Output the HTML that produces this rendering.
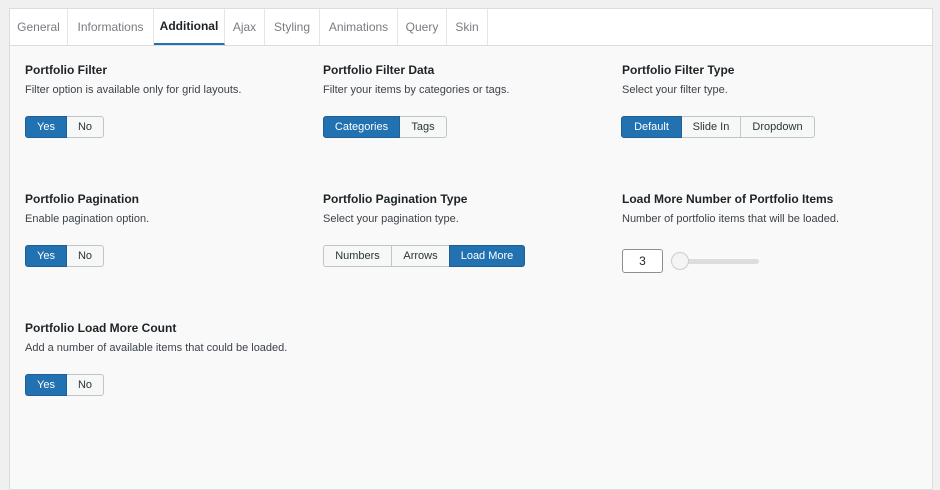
<!DOCTYPE html><html><head><style>
body{margin:0;background:#f0f0f1;font-family:"Liberation Sans",sans-serif;width:940px;height:480px;overflow:hidden}
.panel{position:absolute;left:9px;top:8px;width:922px;height:480px;background:#f9f9f9;border:1px solid #dcdcde}
.tabs{height:36px;background:#fff;border-bottom:1px solid #dcdcde;display:flex;font-size:12px;color:#787c82}
.tabs div{line-height:36px;border-right:1px solid #e5e5e5;text-align:center;box-sizing:border-box}
.tabs .a{color:#1d2327;font-weight:bold;border-bottom:2px solid #2271b1;line-height:35px}
.f{position:absolute}
.t{font-size:12px;font-weight:bold;color:#1d2327}
.d{font-size:11px;color:#3c434a;margin-top:7px}
.g{position:absolute;display:flex}
.g span{height:20px;line-height:20px;font-size:11px;border:1px solid #c3c4c7;background:#f6f7f7;color:#2c3338;text-align:center;margin-left:-1px}
.g span.on{background:#2271b1;border-color:#1d5f96;color:#fff;position:relative}
.g span:first-child{border-radius:3px 0 0 3px}.g span:last-child{border-radius:0 3px 3px 0}
</style></head><body>
<div class="panel"><div class="tabs"><div style="width:58px">General</div><div style="width:86px">Informations</div><div class="a" style="width:71px">Additional</div><div style="width:40px">Ajax</div><div style="width:55px">Styling</div><div style="width:78px">Animations</div><div style="width:49px">Query</div><div style="width:41px">Skin</div></div></div>
<div class="f" style="left:25px;top:63px"><div class="t">Portfolio Filter</div><div class="d">Filter option is available only for grid layouts.</div></div>
<div class="f" style="left:323px;top:63px"><div class="t">Portfolio Filter Data</div><div class="d">Filter your items by categories or tags.</div></div>
<div class="f" style="left:622px;top:63px"><div class="t">Portfolio Filter Type</div><div class="d">Select your filter type.</div></div>
<div class="f" style="left:25px;top:192px"><div class="t">Portfolio Pagination</div><div class="d">Enable pagination option.</div></div>
<div class="f" style="left:323px;top:192px"><div class="t">Portfolio Pagination Type</div><div class="d">Select your pagination type.</div></div>
<div class="f" style="left:622px;top:192px"><div class="t">Load More Number of Portfolio Items</div><div class="d">Number of portfolio items that will be loaded.</div></div>
<div class="f" style="left:25px;top:321px"><div class="t">Portfolio Load More Count</div><div class="d">Add a number of available items that could be loaded.</div></div>
<div class="g" style="left:26px;top:116px"><span class="on" style="width:40px">Yes</span><span style="width:36px">No</span></div>
<div class="g" style="left:324px;top:116px"><span class="on" style="width:75px">Categories</span><span style="width:46px">Tags</span></div>
<div class="g" style="left:622px;top:116px"><span class="on" style="width:59px">Default</span><span style="width:58px">Slide In</span><span style="width:73px">Dropdown</span></div>
<div class="g" style="left:26px;top:245px"><span class="on" style="width:40px">Yes</span><span style="width:36px">No</span></div>
<div class="g" style="left:324px;top:245px"><span style="width:67px">Numbers</span><span style="width:57px">Arrows</span><span class="on" style="width:74px">Load More</span></div>
<div class="g" style="left:26px;top:374px"><span class="on" style="width:40px">Yes</span><span style="width:36px">No</span></div>
<div class="f" style="left:622px;top:249px;width:39px;height:22px;border:1px solid #8c8f94;border-radius:3px;background:#fff;font-size:12px;line-height:22px;text-align:center;color:#1d2327">3</div>
<div class="f" style="left:675px;top:259px;width:84px;height:5px;background:#ddd;border-radius:3px"></div>
<div class="f" style="left:671px;top:252px;width:16px;height:16px;border:1px solid #ccc;border-radius:50%;background:#f4f4f4"></div>
</body></html>
